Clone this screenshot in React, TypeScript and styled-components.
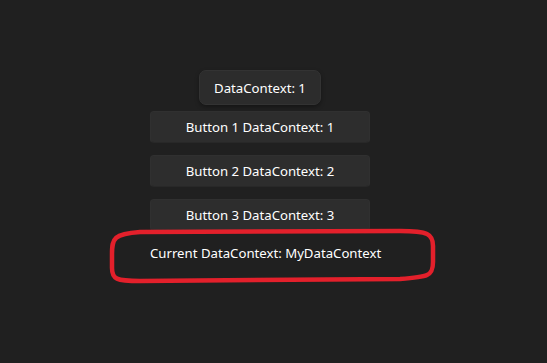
import React from "react";
import styled, { createGlobalStyle } from "styled-components";

const Global = createGlobalStyle`
  html, body { margin: 0; padding: 0; background: #202020; }
  body { font-family: "Noto Sans", "Open Sans", sans-serif; }
`;

const Page = styled.div`
  position: relative;
  width: 547px;
  height: 363px;
  background: #202020;
  overflow: hidden;
  box-sizing: border-box;
  padding: 70px 0 0 150px;
`;

const Column = styled.div`
  width: 220px;
  display: flex;
  flex-direction: column;
  align-items: stretch;
`;

const Card = styled.div`
  align-self: center;
  width: 122px;
  height: 35px;
  box-sizing: border-box;
  border-radius: 7px;
  background: #2c2c2c;
  border: 1px solid #333333;
  box-shadow: 0 2px 4px rgba(0, 0, 0, 0.35);
  color: #ffffff;
  font-size: 13.2px;
  display: flex;
  align-items: center;
  justify-content: center;
  margin-bottom: 6px;
`;

const Buttons = styled.div`
  display: flex;
  flex-direction: column;
  gap: 12px;
`;

const Button = styled.button`
  height: 32px;
  width: 220px;
  box-sizing: border-box;
  border-radius: 4px;
  border: 1px solid #303030;
  border-bottom-color: #282828;
  background: #2d2d2d;
  color: #ffffff;
  font-family: inherit;
  font-size: 13.2px;
  padding: 0;
  display: flex;
  align-items: center;
  justify-content: center;
  cursor: default;
`;

const Status = styled.div`
  margin-top: 12px;
  height: 20px;
  line-height: 20px;
  color: #ffffff;
  font-size: 13.2px;
  white-space: nowrap;
`;

const Annotation = styled.svg`
  position: absolute;
  left: 0;
  top: 0;
  pointer-events: none;
`;

export default function App() {
  return (
    <>
      <Global />
      <Page>
        <Column>
          <Card>DataContext: 1</Card>
          <Buttons>
            <Button>Button 1 DataContext: 1</Button>
            <Button>Button 2 DataContext: 2</Button>
            <Button>Button 3 DataContext: 3</Button>
          </Buttons>
          <Status>Current DataContext: MyDataContext</Status>
        </Column>
        <Annotation width="547" height="363" viewBox="0 0 547 363">
          <path
            d="M 112 254 C 112 238, 114 234, 140 232 L 400 231 C 428 231, 433 234, 433 246 L 433 262 C 433 276, 428 277, 400 279 L 140 281 C 116 281, 112 279, 112 268 Z"
            fill="none"
            stroke="#e3202b"
            strokeWidth="4.5"
            strokeLinejoin="round"
          />
        </Annotation>
      </Page>
    </>
  );
}
